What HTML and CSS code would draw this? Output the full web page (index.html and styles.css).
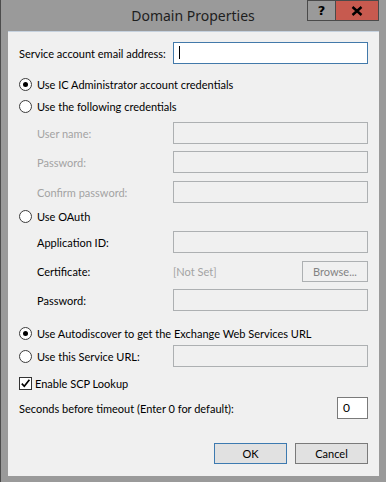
FILE: index.html
```html
<!DOCTYPE html>
<html>
<head>
<meta charset="utf-8">
<link rel="stylesheet" href="styles.css">
</head>
<body>
<div class="window">
  <div class="titlebar">
    <div class="tb-side"></div>
    <div class="title">Domain Properties</div>
    <div class="tb-side caption">
      <div class="cb help">?</div>
      <div class="cb close">
        <svg width="12" height="10" viewBox="0 0 12 10"><path d="M1.5 1 L10.5 9 M10.5 1 L1.5 9" stroke="#000" stroke-width="2.4" fill="none"/></svg>
      </div>
    </div>
  </div>
  <div class="client">
    <div class="row field r-email">
      <span class="lbl">Service account email address:</span>
      <div class="input focus"><span class="caret"></span></div>
    </div>

    <div class="row opt r-admin"><span class="radio checked"></span><span>Use IC Administrator account credentials</span></div>
    <div class="row opt r-follow"><span class="radio"></span><span>Use the following credentials</span></div>

    <div class="row field indent gap7"><span class="lbl disabled">User name:</span><div class="input"></div></div>
    <div class="row field indent gap7"><span class="lbl disabled">Password:</span><div class="input"></div></div>
    <div class="row field indent gap8"><span class="lbl disabled">Confirm password:</span><div class="input"></div></div>

    <div class="row opt r-oauth"><span class="radio"></span><span>Use OAuth</span></div>

    <div class="row field indent gap6"><span class="lbl">Application ID:</span><div class="input"></div></div>
    <div class="row field indent cert">
      <span class="lbl">Certificate:</span>
      <div class="cert-right"><span class="notset">[Not Set]</span><div class="btn browse">Browse...</div></div>
    </div>
    <div class="row field indent gap7"><span class="lbl">Password:</span><div class="input"></div></div>

    <div class="row opt r-auto"><span class="radio checked"></span><span>Use Autodiscover to get the Exchange Web Services URL</span></div>
    <div class="row field r-url">
      <span class="opt-inline"><span class="radio"></span><span>Use this Service URL:</span></span>
      <div class="input"></div>
    </div>

    <div class="row chk-row">
      <span class="check"><svg width="11" height="11" viewBox="0 0 11 11"><path d="M1.8 5.6 L4.3 8.3 L9.4 1.8" stroke="#000" stroke-width="1.7" fill="none"/></svg></span>
      <span>Enable SCP Lookup</span>
    </div>

    <div class="row field r-timeout">
      <span class="lbl">Seconds before timeout (Enter 0 for default):</span>
      <div class="input small">0</div>
    </div>

    <div class="row buttons">
      <div class="btn dlg default">OK</div>
      <div class="btn dlg">Cancel</div>
    </div>
  </div>
</div>
</body>
</html>
```

FILE: styles.css
```css
* { box-sizing: border-box; }
html, body {
  margin: 0;
  padding: 0;
}
body {
  width: 386px;
  height: 482px;
  overflow: hidden;
  background: #9a9a9a;
  font-family: Lato, "Noto Sans", sans-serif;
  font-size: 11px;
  color: #000;
}
.window {
  width: 386px;
  height: 482px;
  border-left: 1px solid #4c4c4c;
  background: #9a9a9a;
}
.titlebar {
  height: 31px;
  display: grid;
  grid-template-columns: 79px 1fr 79px;
  margin-left: -1px;
}
.title {
  text-align: center;
  font-family: "Noto Sans", sans-serif;
  font-size: 14px;
  color: #1e1e1e;
  line-height: 31px;
}
.caption {
  display: flex;
  align-items: flex-start;
  justify-content: flex-end;
  padding-right: 7px;
}
.cb {
  height: 21px;
  border: 1px solid #4a4a4a;
  display: flex;
  align-items: center;
  justify-content: center;
}
.help {
  width: 29px;
  border-right: none;
  font-weight: bold;
  font-size: 13px;
  font-family: "DejaVu Sans", sans-serif;
  color: #000;
  background: #9a9a9a;
}
.close {
  width: 45px;
  background: #c75a4f;
}
.client {
  margin-left: 7px;
  width: 371px;
  height: 445px;
  background: #f0f0f0;
  border-top: 1px solid #c6d2df;
  padding: 10px 11px 0 11px;
}
.row {
  display: flex;
  align-items: center;
}
.field {
  justify-content: space-between;
  height: 22px;
}
.indent { padding-left: 18px; }
.lbl { white-space: nowrap; }
.disabled { color: #a3a3a3; }
.input {
  width: 195px;
  height: 22px;
  border: 1px solid #adb0b2;
  background: #f0f0f0;
}
.input.focus {
  border-color: #4279aa;
  background: #fff;
  padding: 3px 5px;
}
.caret {
  display: block;
  width: 1px;
  height: 13px;
  background: #000;
}
.input.small {
  width: 31px;
  background: #fff;
  border-color: #7a7a7a;
  padding: 1px 0 0 5px;
  line-height: 17px;
  font-size: 12px;
}
.opt { height: 17px; }
.opt-inline { display: flex; align-items: center; }
.radio {
  width: 13px;
  height: 13px;
  border: 1px solid #3c3c3c;
  border-radius: 50%;
  background: #fff;
  margin-right: 5px;
  display: flex;
  align-items: center;
  justify-content: center;
  flex: none;
}
.radio.checked::after {
  content: "";
  width: 5px;
  height: 5px;
  border-radius: 50%;
  background: #000;
}
.r-admin { margin-top: 12px; }
.r-follow { margin-top: 5px; }
.gap6 { margin-top: 6px; }
.gap7 { margin-top: 7px; }
.gap8 { margin-top: 8px; }
.r-oauth { margin-top: 5px; }
.cert { margin-top: 8px; height: 21px; }
.cert-right {
  width: 195px;
  display: flex;
  justify-content: space-between;
  align-items: center;
}
.notset { color: #a3a3a3; }
.btn {
  display: flex;
  align-items: center;
  justify-content: center;
}
.browse {
  width: 66px;
  height: 21px;
  border: 1px solid #adb0b2;
  background: #f0f0f0;
  color: #838383;
}
.r-auto { margin-top: 14px; }
.r-url { margin-top: 3px; }
.chk-row { margin-top: 8px; height: 17px; }
.check {
  width: 13px;
  height: 13px;
  border: 1px solid #333;
  background: #fff;
  margin-right: 3px;
  display: flex;
  align-items: center;
  justify-content: center;
}
.r-timeout { margin-top: 5px; }
.buttons {
  margin-top: 24px;
  justify-content: flex-end;
  gap: 8px;
}
.dlg {
  width: 73px;
  height: 21px;
  border: 1px solid #7a7a7a;
  background: #e1e1e1;
}
.dlg.default { border-color: #3d7ab0; }
```
